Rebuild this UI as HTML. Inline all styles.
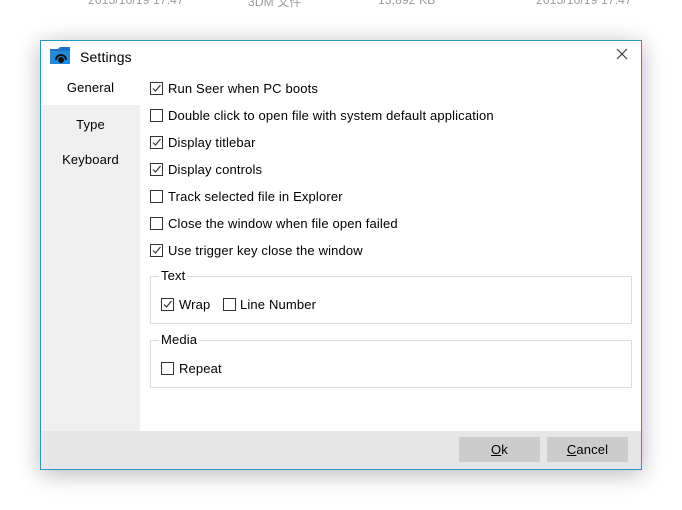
<!DOCTYPE html>
<html><head><style>
*{margin:0;padding:0;box-sizing:border-box}
body{width:682px;height:510px;background:#fff;position:relative;overflow:hidden;font-family:"Liberation Sans","Noto Sans CJK SC",sans-serif;font-size:13px;color:#000;letter-spacing:.15px}
.bg{position:absolute;top:-7px;color:#9a9a9a;font-size:12px}
.win{position:absolute;left:40px;top:40px;width:602px;height:430px;border:1px solid #2896bd;background:#fff;box-shadow:0 4px 22px rgba(0,0,0,.28)}
.title{position:absolute;left:39px;top:8px;font-size:14px}
.close{position:absolute;left:574px;top:6px}
.side{position:absolute;left:0;top:64px;width:99px;height:326px;background:#f0f0f0}
.nav{position:absolute;width:99px;text-align:center}
.cb{position:absolute;width:13px;height:13px;border:1px solid #333;background:#fff}
.cb svg{position:absolute;left:0;top:0}
.lbl{position:absolute;white-space:nowrap}
.grp{position:absolute;left:109px;width:482px;border:1px solid #dcdcdc}
.gl{position:absolute;left:8px;top:-9px;background:#fff;padding:0 2px;line-height:16px}
.foot{position:absolute;left:0;top:390px;width:600px;height:38px;background:#e6e6e6}
.btn{position:absolute;top:6px;width:81px;height:25px;background:#ccc;text-align:center;line-height:25px}
</style></head><body>
<div class="bg" style="left:88px">2015/10/19 17:47</div>
<div class="bg" style="left:248px">3DM 文件</div>
<div class="bg" style="left:378px">13,892 KB</div>
<div class="bg" style="left:536px">2015/10/19 17:47</div>
<div class="win">
 <svg style="position:absolute;left:8px;top:5px" width="22" height="19" viewBox="0 0 22 19"><path d="M1 3h8l2-2h10v16H1z" fill="#1c74c8"/><path d="M1 5h20v13H1z" fill="#2389d8"/><path d="M7 14a5 5 0 0 1 10 0" fill="none" stroke="#111" stroke-width="2"/><circle cx="12" cy="14" r="3" fill="#111"/></svg>
 <div class="title">Settings</div>
 <svg class="close" width="14" height="14"><path d="M2 2L12 12M12 2L2 12" stroke="#333" stroke-width="1.1"/></svg>
 <div class="side"></div>
 <div class="nav" style="top:39px">General</div>
 <div class="nav" style="top:76px">Type</div>
 <div class="nav" style="top:111px">Keyboard</div>

 <div class="cb" style="left:109px;top:41px"><svg width="11" height="11"><path d="M2 5.5l2.5 2.5 5-6" fill="none" stroke="#333" stroke-width="1.2"/></svg></div><div class="lbl" style="left:127px;top:40px">Run Seer when PC boots</div>
 <div class="cb" style="left:109px;top:68px"></div><div class="lbl" style="left:127px;top:67px">Double click to open file with system default application</div>
 <div class="cb" style="left:109px;top:95px"><svg width="11" height="11"><path d="M2 5.5l2.5 2.5 5-6" fill="none" stroke="#333" stroke-width="1.2"/></svg></div><div class="lbl" style="left:127px;top:94px">Display titlebar</div>
 <div class="cb" style="left:109px;top:122px"><svg width="11" height="11"><path d="M2 5.5l2.5 2.5 5-6" fill="none" stroke="#333" stroke-width="1.2"/></svg></div><div class="lbl" style="left:127px;top:121px">Display controls</div>
 <div class="cb" style="left:109px;top:149px"></div><div class="lbl" style="left:127px;top:148px">Track selected file in Explorer</div>
 <div class="cb" style="left:109px;top:176px"></div><div class="lbl" style="left:127px;top:175px">Close the window when file open failed</div>
 <div class="cb" style="left:109px;top:203px"><svg width="11" height="11"><path d="M2 5.5l2.5 2.5 5-6" fill="none" stroke="#333" stroke-width="1.2"/></svg></div><div class="lbl" style="left:127px;top:202px">Use trigger key close the window</div>

 <div class="grp" style="top:235px;height:48px"><div class="gl">Text</div>
  <div class="cb" style="left:10px;top:21px"><svg width="11" height="11"><path d="M2 5.5l2.5 2.5 5-6" fill="none" stroke="#333" stroke-width="1.2"/></svg></div><div class="lbl" style="left:28px;top:20px">Wrap</div>
  <div class="cb" style="left:72px;top:21px"></div><div class="lbl" style="left:89px;top:20px">Line Number</div>
 </div>
 <div class="grp" style="top:299px;height:48px"><div class="gl">Media</div>
  <div class="cb" style="left:10px;top:21px"></div><div class="lbl" style="left:28px;top:20px">Repeat</div>
 </div>

 <div class="foot">
  <div class="btn" style="left:418px"><u>O</u>k</div>
  <div class="btn" style="left:506px"><u>C</u>ancel</div>
 </div>
</div>
</body></html>
